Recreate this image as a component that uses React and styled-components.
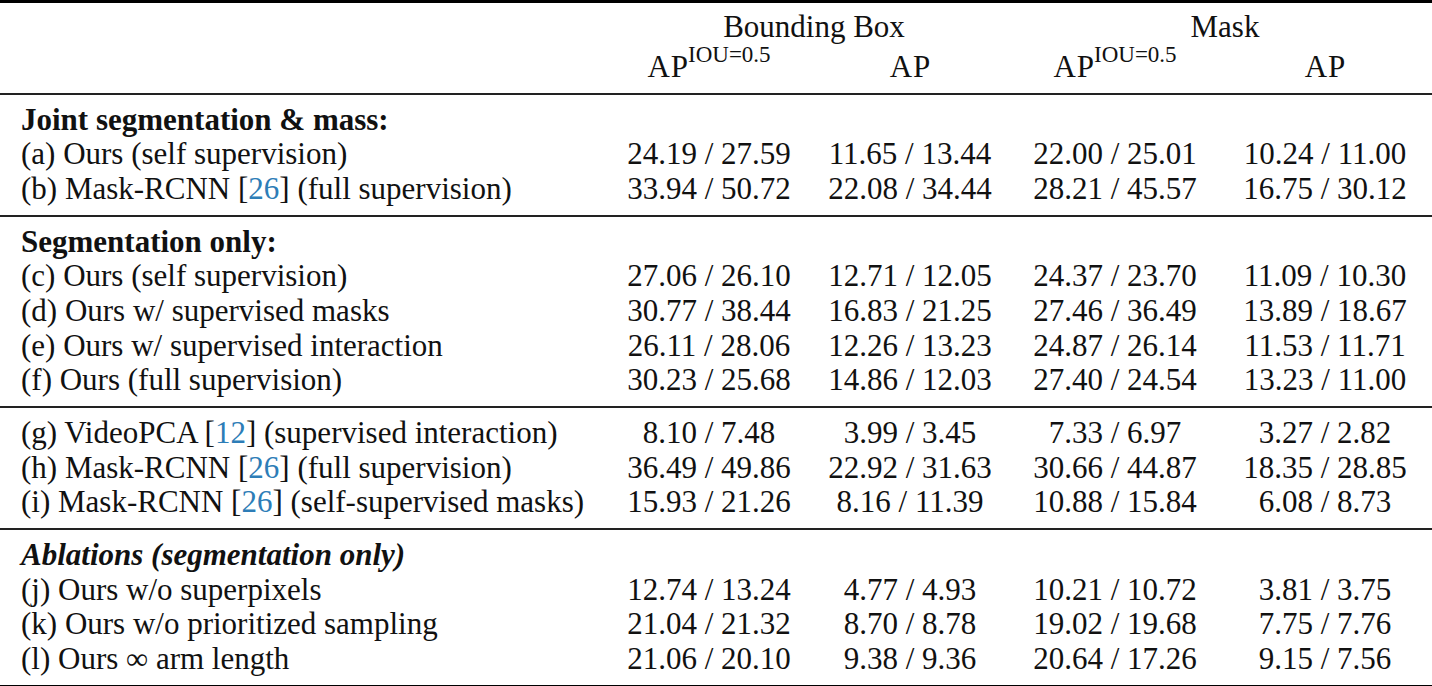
import React from "react";
import styled, { createGlobalStyle } from "styled-components";

const Global = createGlobalStyle`
  html, body { margin: 0; padding: 0; background: #fff; }
  body { font-family: "Liberation Serif", "Times New Roman", serif; color: #111; }
`;

const COLS = "605px 208px 194px 216px 204px";

const Table = styled.div`
  width: 1432px;
  height: 686px;
  box-sizing: border-box;
  border-top: 3px solid #000;
  display: flex;
  flex-direction: column;
  font-size: 31px;
`;

const Section = styled.div`
  display: grid;
  grid-template-columns: ${COLS};
  grid-auto-rows: 34.67px;
  padding: 8px 0;
  border-top: 2px solid #222;
  border-bottom: ${(p) => (p.$last ? "3px solid #000" : "none")};
`;

const Header = styled.div`
  display: grid;
  grid-template-columns: ${COLS};
  grid-template-rows: 34.67px 40px;
  padding: 7px 0 8px;
`;

const GroupTitle = styled.div`
  grid-column: ${(p) => p.$col} / span 2;
  text-align: center;
  padding-left: 16px;
  line-height: 34.67px;
  white-space: nowrap;
`;

const HeadCell = styled.div`
  grid-row: 2;
  grid-column: ${(p) => p.$col};
  display: flex;
  justify-content: center;
  align-items: flex-end;
  line-height: 34.67px;
  white-space: nowrap;
`;

const Abbr = styled.span`
  letter-spacing: 1px;
`;

const Sup = styled.sup`
  font-size: 23px;
  vertical-align: 0;
  position: relative;
  top: -15px;
  line-height: 0;
`;

const Label = styled.div`
  grid-column: 1 / span 5;
  padding-left: 21px;
  line-height: 34.67px;
  white-space: nowrap;
  font-weight: 700;
  font-style: ${(p) => (p.$italic ? "italic" : "normal")};
`;

const Name = styled.div`
  padding-left: 21px;
  line-height: 34.67px;
  white-space: nowrap;
`;

const Num = styled.div`
  text-align: center;
  line-height: 34.67px;
  white-space: nowrap;
`;

const Cite = styled.span`
  color: #2d7db7;
`;

const Row = ({ name, vals }) => (
  <>
    <Name>{name}</Name>
    {vals.map((v, i) => (
      <Num key={i}>{v.replace("/", " / ")}</Num>
    ))}
  </>
);

const c = (n) => <Cite>{n}</Cite>;

const sections = [
  {
    label: "Joint segmentation & mass:",
    rows: [
      [<>(a) Ours (self supervision)</>, ["24.19/27.59", "11.65/13.44", "22.00/25.01", "10.24/11.00"]],
      [<>(b) Mask-RCNN [{c(26)}] (full supervision)</>, ["33.94/50.72", "22.08/34.44", "28.21/45.57", "16.75/30.12"]],
    ],
  },
  {
    label: "Segmentation only:",
    rows: [
      [<>(c) Ours (self supervision)</>, ["27.06/26.10", "12.71/12.05", "24.37/23.70", "11.09/10.30"]],
      [<>(d) Ours w/ supervised masks</>, ["30.77/38.44", "16.83/21.25", "27.46/36.49", "13.89/18.67"]],
      [<>(e) Ours w/ supervised interaction</>, ["26.11/28.06", "12.26/13.23", "24.87/26.14", "11.53/11.71"]],
      [<>(f) Ours (full supervision)</>, ["30.23/25.68", "14.86/12.03", "27.40/24.54", "13.23/11.00"]],
    ],
  },
  {
    rows: [
      [<>(g) VideoPCA [{c(12)}] (supervised interaction)</>, ["8.10/7.48", "3.99/3.45", "7.33/6.97", "3.27/2.82"]],
      [<>(h) Mask-RCNN [{c(26)}] (full supervision)</>, ["36.49/49.86", "22.92/31.63", "30.66/44.87", "18.35/28.85"]],
      [<>(i) Mask-RCNN [{c(26)}] (self-supervised masks)</>, ["15.93/21.26", "8.16/11.39", "10.88/15.84", "6.08/8.73"]],
    ],
  },
  {
    label: "Ablations (segmentation only)",
    italic: true,
    rows: [
      [<>(j) Ours w/o superpixels</>, ["12.74/13.24", "4.77/4.93", "10.21/10.72", "3.81/3.75"]],
      [<>(k) Ours w/o prioritized sampling</>, ["21.04/21.32", "8.70/8.78", "19.02/19.68", "7.75/7.76"]],
      [<>(l) Ours ∞ arm length</>, ["21.06/20.10", "9.38/9.36", "20.64/17.26", "9.15/7.56"]],
    ],
  },
];

const APIou = () => (
  <span>
    <Abbr>A</Abbr>P<Sup>IOU=0.5</Sup>
  </span>
);

export default function App() {
  return (
    <>
      <Global />
      <Table>
        <Header>
          <GroupTitle $col={2}>Bounding Box</GroupTitle>
          <GroupTitle $col={4}>Mask</GroupTitle>
          <HeadCell $col={2}>
            <APIou />
          </HeadCell>
          <HeadCell $col={3}>
            <span>
              <Abbr>A</Abbr>P
            </span>
          </HeadCell>
          <HeadCell $col={4}>
            <APIou />
          </HeadCell>
          <HeadCell $col={5}>
            <span>
              <Abbr>A</Abbr>P
            </span>
          </HeadCell>
        </Header>
        {sections.map((s, i) => (
          <Section key={i} $last={i === sections.length - 1}>
            {s.label && <Label $italic={s.italic}>{s.label}</Label>}
            {s.rows.map((r, j) => (
              <Row key={j} name={r[0]} vals={r[1]} />
            ))}
          </Section>
        ))}
      </Table>
    </>
  );
}
